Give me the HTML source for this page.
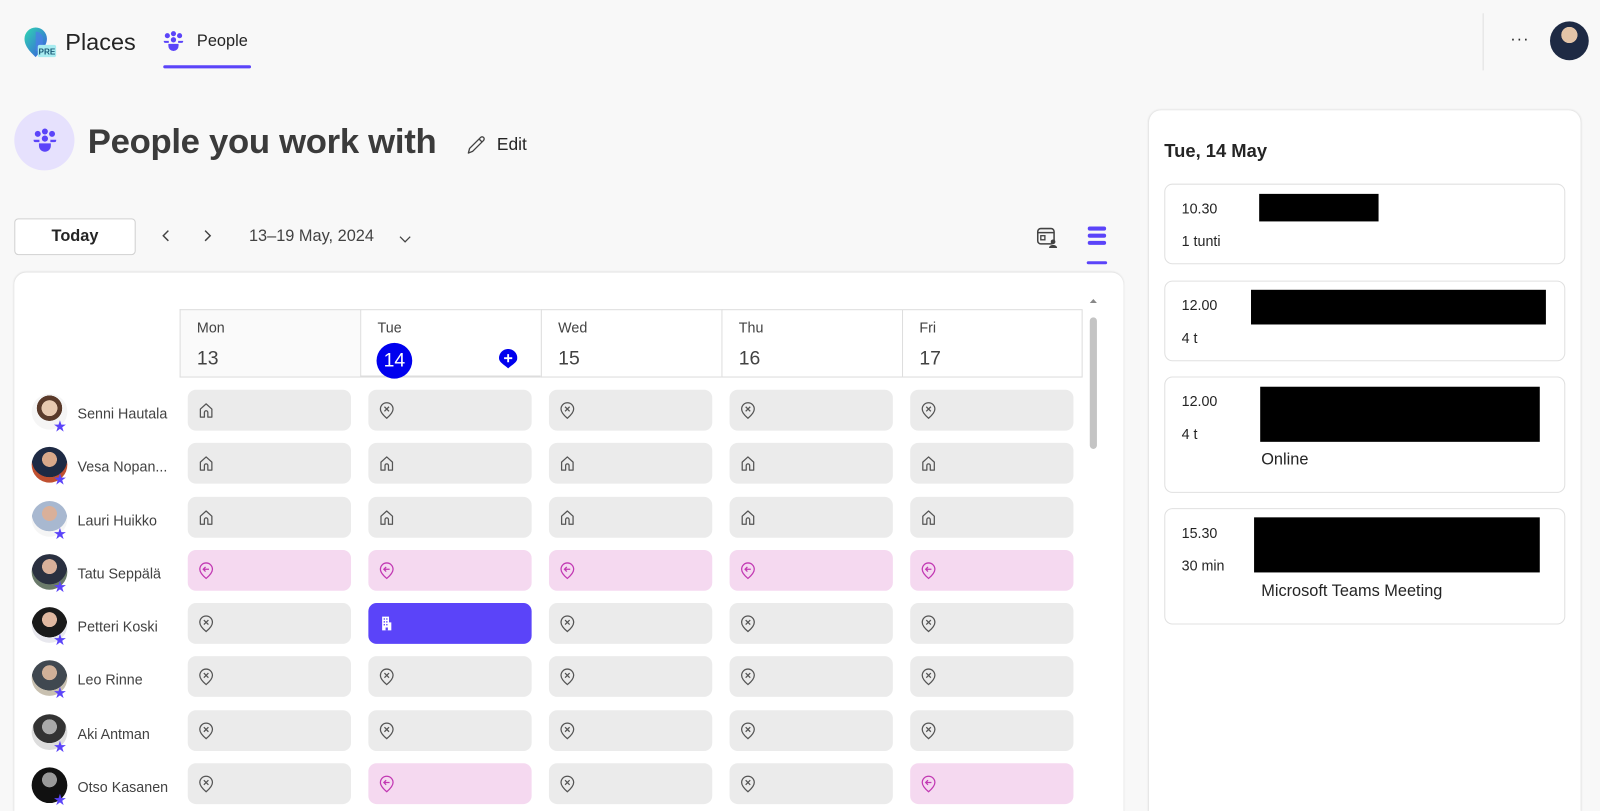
<!DOCTYPE html>
<html style="width:1600px;height:811px;overflow:hidden"><head><meta charset="utf-8"><style>
*{box-sizing:border-box;margin:0;padding:0}
body{width:1600px;height:811px;overflow:hidden;background:#f8f8f8;font-family:"Liberation Sans",sans-serif;color:#242424;position:relative}
#w{position:absolute;left:0;top:0;width:1568px;height:795px;overflow:hidden;transform:scale(1.0204);transform-origin:0 0}
.a{position:absolute}
.cell{position:absolute;width:160px;height:40px;border-radius:8px;background:#ebebeb}
.cell svg{position:absolute;left:9px;top:11px;width:18px;height:18px}
.pk{background:#f5d9f0}
.bl{background:#5b44f9}
.hd{position:absolute;top:303px;height:67px;width:177px;border:1px solid #ddd;border-right:none;background:#fff}
.hd .d{position:absolute;left:16px;top:9px;font-size:14px;color:#424242}
.hd .n{position:absolute;left:16px;top:37px;font-size:19px;color:#424242}
.nm{position:absolute;left:76px;font-size:14px;color:#424242}
.av{position:absolute;left:31px;width:35px;height:35px;border-radius:50%;background:#555}
.st{position:absolute;left:52px;width:16px;height:16px;color:#5b44f9;font-size:15px;line-height:16px}
.ev{position:absolute;left:1141px;width:393px;border:1.5px solid #e0e0e0;border-radius:8px;background:#fff}
.ev .t{position:absolute;left:16px;font-size:14px;color:#242424}
.blk{position:absolute;background:#000}
</style></head><body><div id="w">
<svg width="0" height="0" style="position:absolute">
<defs>
<symbol id="h" viewBox="0 0 16 16"><path d="M3 14V7L8 2.5 13 7v7h-3.5V10a1.5 1.5 0 0 0-3 0v4Z" fill="none" stroke="#555" stroke-width="1.1" stroke-linejoin="round"/></symbol>
<symbol id="x" viewBox="0 0 16 16"><path d="M8 15C5 12.5 2.5 10 2.5 7a5.5 5.5 0 0 1 11 0c0 3-2.5 5.5-5.5 8Z" fill="none" stroke="#555" stroke-width="1.1"/><path d="M6 5l4 4M10 5l-4 4" stroke="#555" stroke-width="1.1"/></symbol>
<symbol id="p" viewBox="0 0 16 16"><path d="M8 15C5 12.5 2.5 10 2.5 7a5.5 5.5 0 0 1 11 0c0 3-2.5 5.5-5.5 8Z" fill="none" stroke="#c239b3" stroke-width="1.1"/><path d="M10.5 7h-5M7.5 5L5.5 7l2 2" fill="none" stroke="#c239b3" stroke-width="1.1"/></symbol>
<symbol id="o" viewBox="0 0 16 16"><path d="M4 2h6v5h2v7H4Z" fill="#fff"/><g fill="#5b44f9"><rect x="5.3" y="3.5" width="1.2" height="1.2"/><rect x="7.5" y="3.5" width="1.2" height="1.2"/><rect x="5.3" y="6" width="1.2" height="1.2"/><rect x="7.5" y="6" width="1.2" height="1.2"/><rect x="5.3" y="8.5" width="1.2" height="1.2"/><rect x="7.5" y="8.5" width="1.2" height="1.2"/><rect x="7" y="11.5" width="2" height="2.5"/></g></symbol>
<symbol id="ppl" viewBox="0 0 24 24" fill="#5b44f9"><circle cx="6" cy="7" r="2.5"/><circle cx="12" cy="5" r="2.5"/><circle cx="18" cy="7" r="2.5"/><circle cx="12" cy="11" r="2.6"/><path d="M2.5 12h5a4 4 0 0 0 0 2H4A1.5 1.5 0 0 1 2.5 12.5ZM16.5 12h5v.5A1.5 1.5 0 0 1 20 14h-3.5a4 4 0 0 0 0-2Z"/><path d="M7 15h10v2a5 5 0 0 1-10 0Z"/></symbol>
</defs></svg>

<svg class="a" style="left:22px;top:25px" width="34" height="34" viewBox="0 0 34 34"><defs><linearGradient id="g" x1="0" y1="0" x2="1" y2="1"><stop offset="0" stop-color="#2fd8b0"/><stop offset="1" stop-color="#3a56e0"/></linearGradient></defs><path d="M13 2a11 11 0 0 1 11 11c0 8-8 14-11 18C9 27 2 21 2 13A11 11 0 0 1 13 2Z" fill="url(#g)"/><path d="M13 6a7 7 0 0 1 7 7v12h-7Z" fill="#4b7de8" opacity=".7"/><rect x="15" y="19" width="18" height="12" rx="2" fill="#a8ecf0"/><text x="24" y="28.5" font-size="8" font-weight="700" text-anchor="middle" fill="#1a5a78" font-family="Liberation Sans,sans-serif">PRE</text></svg>
<div class="a" style="left:64px;top:28px;font-size:23px;color:#242424">Places</div>
<svg class="a" style="left:158px;top:28px" width="24" height="24"><use href="#ppl"/></svg>
<div class="a" style="left:193px;top:32px;font-size:16px;color:#242424">People</div>
<div class="a" style="left:160px;top:64px;width:86px;height:3px;border-radius:2px;background:#5b44f9"></div>
<div class="a" style="left:1453px;top:13px;width:1px;height:56px;background:#e0e0e0"></div>
<div class="a" style="left:1480px;top:30px;font-size:16px;letter-spacing:1px;color:#242424">···</div>
<div class="a" style="left:1519px;top:21px;width:38px;height:38px;border-radius:50%;background:radial-gradient(circle at 50% 35%,#e3c4a8 0 25%,#1e2a44 26% 100%)"></div>

<div class="a" style="left:14px;top:108px;width:59px;height:59px;border-radius:50%;background:#e6e1fd"></div>
<svg class="a" style="left:30px;top:123px" width="28" height="28"><use href="#ppl"/></svg>
<div class="a" style="left:86px;top:120px;font-size:34px;font-weight:600;color:#3b3b3b;letter-spacing:-0.3px">People you work with</div>
<svg class="a" style="left:456px;top:131px" width="22" height="22" viewBox="0 0 22 22"><path d="M3 19l1.2-4.5L15 3.7a2 2 0 0 1 2.9 2.9L7.1 17.4Z M13.5 5.2l3 3" fill="none" stroke="#424242" stroke-width="1.3" stroke-linejoin="round"/></svg>
<div class="a" style="left:487px;top:132px;font-size:17px;color:#242424">Edit</div>

<div class="a" style="left:14px;top:214px;width:119px;height:36px;border:1px solid #d1d1d1;border-radius:4px;background:#fff;text-align:center;line-height:34px;font-size:16px;font-weight:600">Today</div>
<svg class="a" style="left:157px;top:224px" width="12" height="14"><path d="M8 2L3 7l5 5" fill="none" stroke="#424242" stroke-width="1.4"/></svg>
<svg class="a" style="left:197px;top:224px" width="12" height="14"><path d="M4 2l5 5-5 5" fill="none" stroke="#424242" stroke-width="1.4"/></svg>
<div class="a" style="left:244px;top:223px;font-size:16px;color:#424242">13–19 May, 2024</div>
<svg class="a" style="left:390px;top:229px" width="14" height="10"><path d="M2 3l5 5 5-5" fill="none" stroke="#424242" stroke-width="1.2"/></svg>
<svg class="a" style="left:1015px;top:221px" width="24" height="24" viewBox="0 0 24 24"><rect x="2" y="3" width="16" height="15" rx="3" fill="none" stroke="#424242" stroke-width="1.5"/><path d="M2 7h16" stroke="#424242" stroke-width="1.5"/><rect x="5" y="10" width="4" height="4" fill="none" stroke="#424242" stroke-width="1.3"/><circle cx="17" cy="16" r="2.3" fill="#424242"/><path d="M13 22a4 3 0 0 1 8 0Z" fill="#424242"/></svg>
<svg class="a" style="left:1065px;top:221px" width="20" height="22"><rect x="1" y="1" width="18" height="4" rx="2" fill="#5b44f9"/><rect x="1" y="8" width="18" height="4" rx="2" fill="#5b44f9"/><rect x="1" y="15" width="18" height="4" rx="2" fill="#5b44f9"/></svg>
<div class="a" style="left:1065px;top:256px;width:20px;height:3px;border-radius:2px;background:#5b44f9"></div>

<div class="a" style="left:14px;top:267px;width:1087px;height:528px;background:#fff;border-radius:12px 12px 0 0;box-shadow:0 0 2px rgba(0,0,0,.15)"></div>
<div class="a" style="left:1068px;top:311px;width:7px;height:129px;border-radius:4px;background:#c4c4c4"></div>
<svg class="a" style="left:1067px;top:292px" width="9" height="6"><path d="M1 5l3.5-4 3.5 4Z" fill="#888"/></svg>

<div class="hd" style="left:176px;background:#fafafa"><div class="d">Mon</div><div class="n">13</div></div>
<div class="hd" style="left:353px;border-bottom:2px solid #ddd"><div class="d">Tue</div><div class="a" style="left:15px;top:32px;width:35px;height:35px;border-radius:50%;background:#0000ee;color:#fff;font-size:19px;text-align:center;line-height:35px">14</div>
<svg class="a" style="left:135px;top:38px" width="18" height="20" viewBox="0 0 18 20"><path d="M9 19C5 15.5 0 13 0 9a9 9 0 0 1 18 0c0 4-5 6.5-9 10Z" fill="#0000ee"/><path d="M9 5v8M5 9h8" stroke="#fff" stroke-width="1.8"/></svg></div>
<div class="hd" style="left:530px"><div class="d">Wed</div><div class="n">15</div></div>
<div class="hd" style="left:707px"><div class="d">Thu</div><div class="n">16</div></div>
<div class="hd" style="left:884px;width:177px;border-right:1px solid #ddd"><div class="d">Fri</div><div class="n">17</div></div>

<div class="av" style="top:386px;background:radial-gradient(circle at 50% 40%,#e8c9b0 0 28%,#5a3a2a 29% 45%,#f5f5f5 46%)"></div><div class="st" style="top:411px">★</div><div class="nm" style="top:397px">Senni Hautala</div>
<div class="av" style="top:438px;background:radial-gradient(circle at 50% 35%,#d9a88a 0 25%,#1e2a44 26% 60%,#c05030 61%)"></div><div class="st" style="top:463px">★</div><div class="nm" style="top:449px">Vesa Nopan...</div>
<div class="av" style="top:491px;background:radial-gradient(circle at 50% 35%,#d9b09a 0 25%,#a8b8d0 26% 60%,#f5f5f5 61%)"></div><div class="st" style="top:516px">★</div><div class="nm" style="top:502px">Lauri Huikko</div>
<div class="av" style="top:543px;background:radial-gradient(circle at 50% 35%,#d9b09a 0 25%,#2a3040 26% 60%,#6a7a6a 61%)"></div><div class="st" style="top:568px">★</div><div class="nm" style="top:554px">Tatu Seppälä</div>
<div class="av" style="top:595px;background:radial-gradient(circle at 50% 35%,#e0b8a0 0 25%,#1a1a1a 26% 60%,#e8e8ee 61%)"></div><div class="st" style="top:620px">★</div><div class="nm" style="top:606px">Petteri Koski</div>
<div class="av" style="top:647px;background:radial-gradient(circle at 50% 35%,#d0b098 0 25%,#404850 26% 60%,#c8c0b0 61%)"></div><div class="st" style="top:672px">★</div><div class="nm" style="top:658px">Leo Rinne</div>
<div class="av" style="top:700px;background:radial-gradient(circle at 50% 35%,#aaa 0 25%,#333 26% 55%,#ddd 56%)"></div><div class="st" style="top:725px">★</div><div class="nm" style="top:711px">Aki Antman</div>
<div class="av" style="top:752px;background:radial-gradient(circle at 50% 35%,#999 0 25%,#111 26%)"></div><div class="st" style="top:777px">★</div><div class="nm" style="top:763px">Otso Kasanen</div>

<div class="cell" style="left:184px;top:382px"><svg><use href="#h"/></svg></div>
<div class="cell" style="left:361px;top:382px"><svg><use href="#x"/></svg></div>
<div class="cell" style="left:538px;top:382px"><svg><use href="#x"/></svg></div>
<div class="cell" style="left:715px;top:382px"><svg><use href="#x"/></svg></div>
<div class="cell" style="left:892px;top:382px"><svg><use href="#x"/></svg></div>

<div class="cell" style="left:184px;top:434px"><svg><use href="#h"/></svg></div>
<div class="cell" style="left:361px;top:434px"><svg><use href="#h"/></svg></div>
<div class="cell" style="left:538px;top:434px"><svg><use href="#h"/></svg></div>
<div class="cell" style="left:715px;top:434px"><svg><use href="#h"/></svg></div>
<div class="cell" style="left:892px;top:434px"><svg><use href="#h"/></svg></div>

<div class="cell" style="left:184px;top:487px"><svg><use href="#h"/></svg></div>
<div class="cell" style="left:361px;top:487px"><svg><use href="#h"/></svg></div>
<div class="cell" style="left:538px;top:487px"><svg><use href="#h"/></svg></div>
<div class="cell" style="left:715px;top:487px"><svg><use href="#h"/></svg></div>
<div class="cell" style="left:892px;top:487px"><svg><use href="#h"/></svg></div>

<div class="cell pk" style="left:184px;top:539px"><svg><use href="#p"/></svg></div>
<div class="cell pk" style="left:361px;top:539px"><svg><use href="#p"/></svg></div>
<div class="cell pk" style="left:538px;top:539px"><svg><use href="#p"/></svg></div>
<div class="cell pk" style="left:715px;top:539px"><svg><use href="#p"/></svg></div>
<div class="cell pk" style="left:892px;top:539px"><svg><use href="#p"/></svg></div>

<div class="cell" style="left:184px;top:591px"><svg><use href="#x"/></svg></div>
<div class="cell bl" style="left:361px;top:591px"><svg><use href="#o"/></svg></div>
<div class="cell" style="left:538px;top:591px"><svg><use href="#x"/></svg></div>
<div class="cell" style="left:715px;top:591px"><svg><use href="#x"/></svg></div>
<div class="cell" style="left:892px;top:591px"><svg><use href="#x"/></svg></div>

<div class="cell" style="left:184px;top:643px"><svg><use href="#x"/></svg></div>
<div class="cell" style="left:361px;top:643px"><svg><use href="#x"/></svg></div>
<div class="cell" style="left:538px;top:643px"><svg><use href="#x"/></svg></div>
<div class="cell" style="left:715px;top:643px"><svg><use href="#x"/></svg></div>
<div class="cell" style="left:892px;top:643px"><svg><use href="#x"/></svg></div>

<div class="cell" style="left:184px;top:696px"><svg><use href="#x"/></svg></div>
<div class="cell" style="left:361px;top:696px"><svg><use href="#x"/></svg></div>
<div class="cell" style="left:538px;top:696px"><svg><use href="#x"/></svg></div>
<div class="cell" style="left:715px;top:696px"><svg><use href="#x"/></svg></div>
<div class="cell" style="left:892px;top:696px"><svg><use href="#x"/></svg></div>

<div class="cell" style="left:184px;top:748px"><svg><use href="#x"/></svg></div>
<div class="cell pk" style="left:361px;top:748px"><svg><use href="#p"/></svg></div>
<div class="cell" style="left:538px;top:748px"><svg><use href="#x"/></svg></div>
<div class="cell" style="left:715px;top:748px"><svg><use href="#x"/></svg></div>
<div class="cell pk" style="left:892px;top:748px"><svg><use href="#p"/></svg></div>

<div class="a" style="left:1126px;top:108px;width:423px;height:687px;background:#fff;border-radius:12px 12px 0 0;box-shadow:0 0 2px rgba(0,0,0,.15)"></div>
<div class="a" style="left:1141px;top:138px;font-size:18px;font-weight:600;color:#242424">Tue, 14 May</div>

<div class="ev" style="top:180px;height:79px"><div class="t" style="top:15px">10.30</div><div class="t" style="top:47px">1 tunti</div></div>
<div class="blk" style="left:1234px;top:190px;width:117px;height:27px"></div>
<div class="ev" style="top:275px;height:79px"><div class="t" style="top:15px">12.00</div><div class="t" style="top:47px">4 t</div></div>
<div class="blk" style="left:1226px;top:284px;width:289px;height:34px"></div>
<div class="ev" style="top:369px;height:114px"><div class="t" style="top:15px">12.00</div><div class="t" style="top:47px">4 t</div><div class="t" style="left:94px;top:72px;font-size:16px">Online</div></div>
<div class="blk" style="left:1235px;top:379px;width:274px;height:54px"></div>
<div class="ev" style="top:498px;height:114px"><div class="t" style="top:15px">15.30</div><div class="t" style="top:47px">30 min</div><div class="t" style="left:94px;top:72px;font-size:16px">Microsoft Teams Meeting</div></div>
<div class="blk" style="left:1229px;top:507px;width:280px;height:54px"></div>
</div></body></html>
